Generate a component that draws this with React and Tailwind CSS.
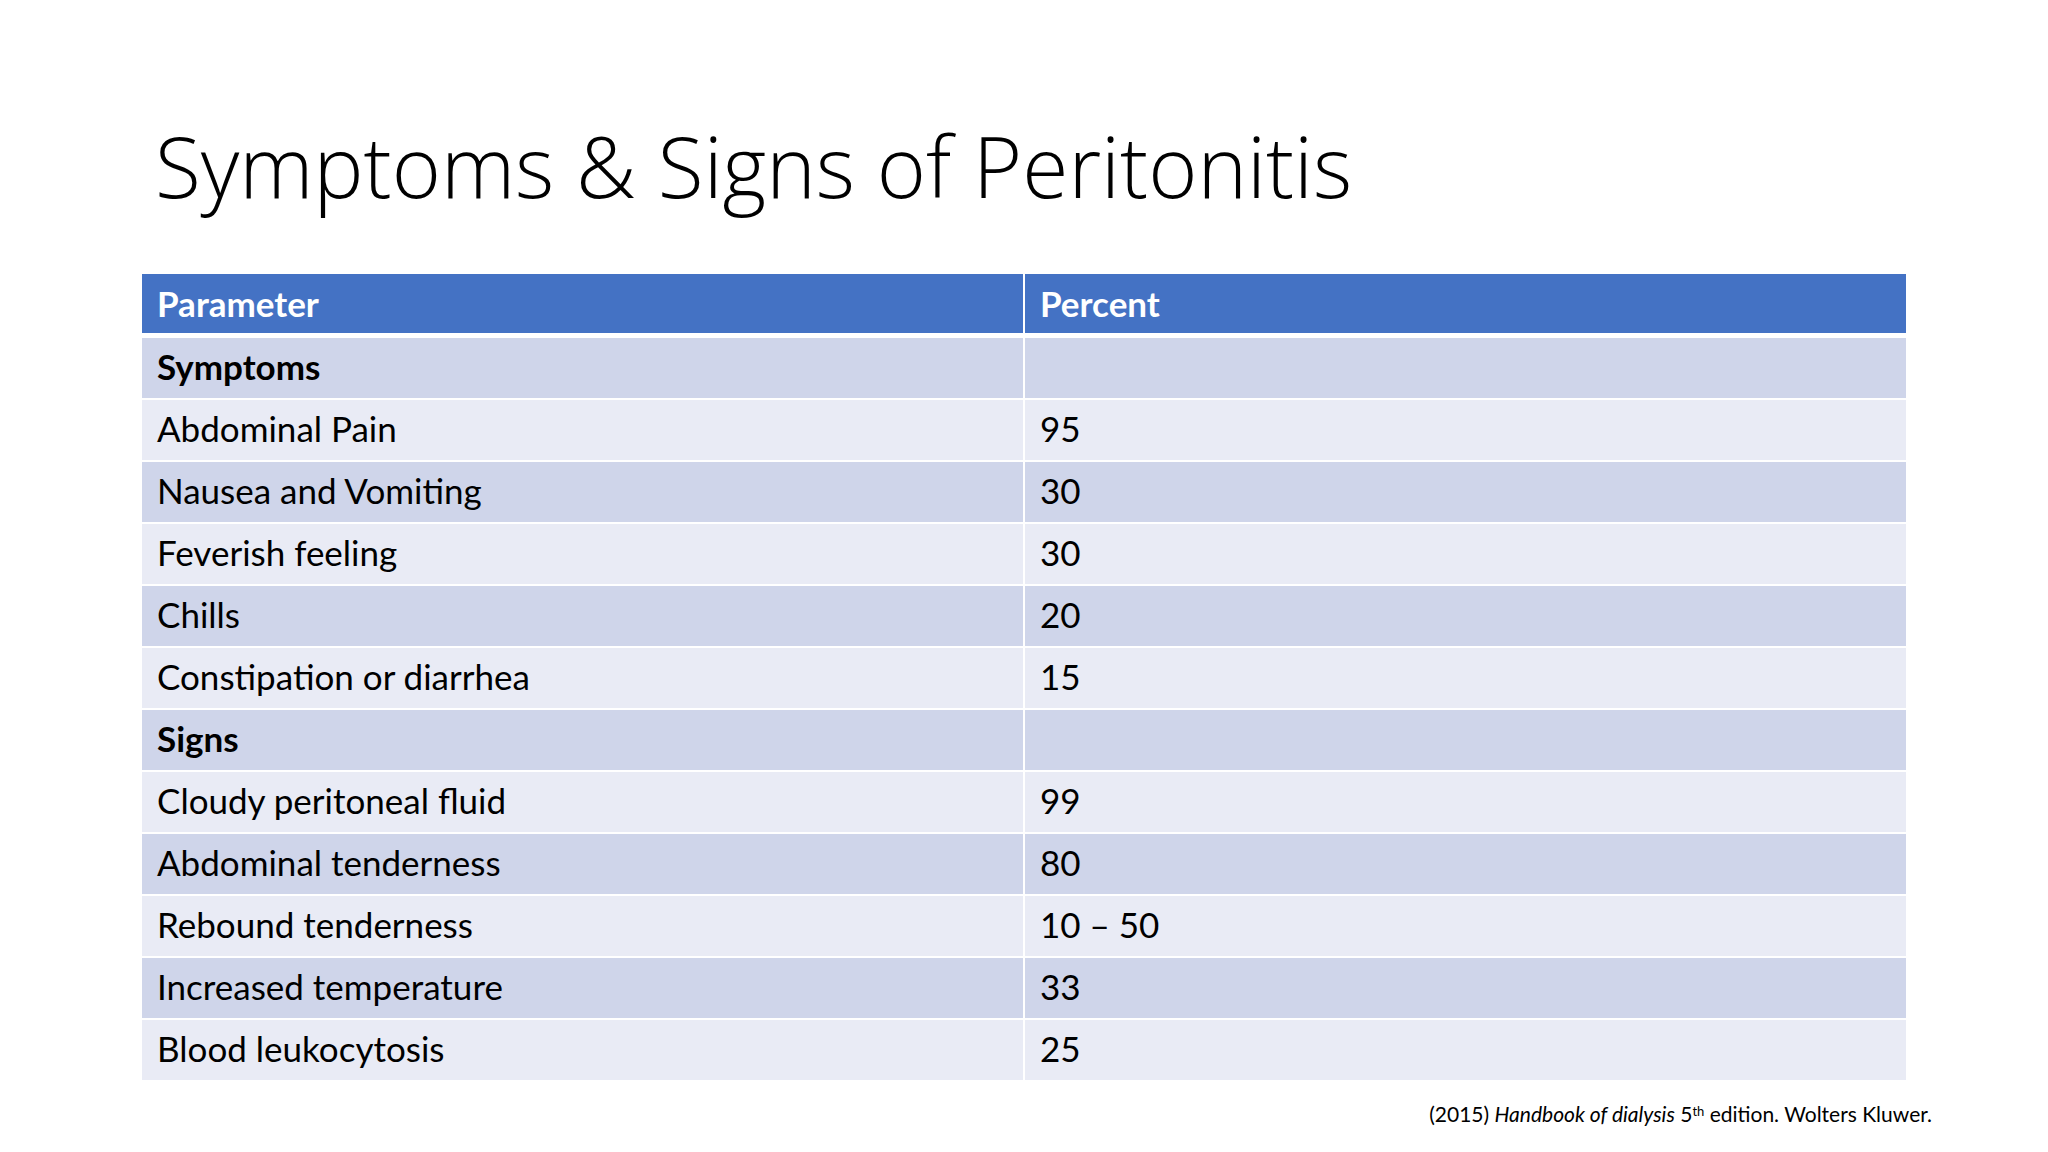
import React from "react";

const rows = [
  { label: "Symptoms", value: "", head: true },
  { label: "Abdominal Pain", value: "95" },
  { label: "Nausea and Vomiting", value: "30" },
  { label: "Feverish feeling", value: "30" },
  { label: "Chills", value: "20" },
  { label: "Constipation or diarrhea", value: "15" },
  { label: "Signs", value: "", head: true },
  { label: "Cloudy peritoneal fluid", value: "99" },
  { label: "Abdominal tenderness", value: "80" },
  { label: "Rebound tenderness", value: "10 – 50" },
  { label: "Increased temperature", value: "33" },
  { label: "Blood leukocytosis", value: "25" },
];

function Row({ label, value, head, index }) {
  const bg = index % 2 === 0 ? "bg-[#cfd5ea]" : "bg-[#e9ebf5]";
  return (
    <div className="flex gap-[2px] h-[60px]">
      <div className={`${bg} w-[881px] flex items-center pl-[15px] pb-[4px] ${head ? "font-bold" : ""}`}>
        {label}
      </div>
      <div className={`${bg} w-[881px] flex items-center pl-[15px] pb-[4px]`}>{value}</div>
    </div>
  );
}

export default function App() {
  return (
    <div
      className="w-[2048px] h-[1152px] bg-white overflow-hidden text-black"
      style={{ fontFamily: "Lato, 'Open Sans', sans-serif" }}
    >
      <div className="pt-[124px] pl-[155px]">
        <h1 className="text-[84px] leading-none font-light whitespace-nowrap" style={{ fontFamily: "'Open Sans', Lato, sans-serif" }}>
          Symptoms &amp; Signs of Peritonitis
        </h1>
      </div>

      <section className="mt-[66px] ml-[142px] w-[1764px] text-[35px]">
        <div className="flex gap-[2px] h-[59px] text-white font-bold">
          <div className="bg-[#4472c4] w-[881px] flex items-center pl-[15px]">Parameter</div>
          <div className="bg-[#4472c4] w-[881px] flex items-center pl-[15px]">Percent</div>
        </div>
        <div className="mt-[5px] flex flex-col gap-[2px]">
          {rows.map((r, i) => (
            <Row key={r.label} {...r} index={i} />
          ))}
        </div>
      </section>

      <div className="w-[1932px] mt-[18px] text-right text-[21px] whitespace-nowrap">
        (2015) <i>Handbook of dialysis</i> 5<sup className="text-[13px]">th</sup> edition. Wolters Kluwer.
      </div>
    </div>
  );
}
